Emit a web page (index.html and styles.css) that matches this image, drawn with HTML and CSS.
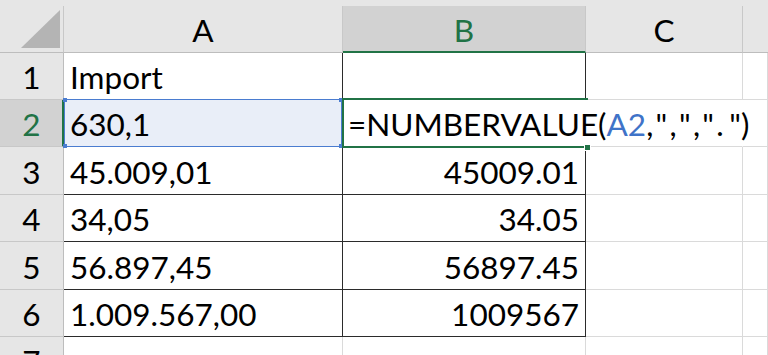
FILE: index.html
```html
<!DOCTYPE html>
<html lang="en">
<head>
<meta charset="utf-8">
<title>NUMBERVALUE</title>
<link rel="stylesheet" href="styles.css">
</head>
<body>
<div class="sheet">
  <div class="strip"></div>

  <div class="hdr corner">
    <svg class="selall" width="63" height="46" viewBox="0 0 63 46"><polygon points="21,42 60,4 60,42" fill="#b4b4b4"/></svg>
  </div>
  <div class="hdr col">A</div>
  <div class="hdr col sel-col">B</div>
  <div class="hdr col">C</div>
  <div class="hdr col last"></div>

  <div class="rh">1</div>
  <div class="cell dark-r">Import</div>
  <div class="cell dark-r"></div>
  <div class="cell"></div>
  <div class="cell"></div>

  <div class="rh sel-row">2</div>
  <div class="cell ref dark-r">630,1<span class="refbox"><i class="h tl"></i><i class="h tr"></i><i class="h bl"></i><i class="h br"></i></span></div>
  <div class="cell edit">=NUMBERVALUE(<span class="refc">A2</span><span class="punct">,",",".</span>")<span class="caret"></span><span class="handle"></span></div>
  <div class="cell no-r"></div>
  <div class="cell"></div>

  <div class="rh">3</div>
  <div class="cell dark-r dark-b">45.009,01</div>
  <div class="cell num dark-r dark-b">45009.01</div>
  <div class="cell"></div>
  <div class="cell"></div>

  <div class="rh">4</div>
  <div class="cell dark-r dark-b">34,05</div>
  <div class="cell num dark-r dark-b">34.05</div>
  <div class="cell"></div>
  <div class="cell"></div>

  <div class="rh">5</div>
  <div class="cell dark-r dark-b">56.897,45</div>
  <div class="cell num dark-r dark-b">56897.45</div>
  <div class="cell"></div>
  <div class="cell"></div>

  <div class="rh">6</div>
  <div class="cell dark-r dark-b">1.009.567,00</div>
  <div class="cell num dark-r dark-b">1009567</div>
  <div class="cell"></div>
  <div class="cell"></div>

  <div class="rh">7</div>
  <div class="cell"></div>
  <div class="cell"></div>
  <div class="cell"></div>
  <div class="cell"></div>
</div>
</body>
</html>
```

FILE: styles.css
```css
* { box-sizing: border-box; }
html, body { margin: 0; padding: 0; }
body {
  width: 768px;
  height: 355px;
  overflow: hidden;
  background: #fff;
  font-family: Lato, "Open Sans", sans-serif;
  font-size: 31.5px;
  color: #000;
}
.sheet {
  display: grid;
  grid-template-columns: 64px 279px 243px 157px 1fr;
  grid-template-rows: 6px 47px 47px 47px 48px 47px 48px 47px 47px;
}
.strip {
  grid-column: 1 / -1;
  background: #e6e6e6;
}
.hdr, .rh, .cell {
  display: flex;
  align-items: flex-end;
  padding-bottom: 6px;
  line-height: 1;
  white-space: nowrap;
}
.hdr {
  background: #e6e6e6;
  border-right: 1px solid #c8c8c8;
  border-bottom: 1px solid #bdbdbd;
  justify-content: center;
}
.hdr.last { border-right: 0; }
.corner {
  padding: 0;
  align-items: stretch;
  border-right: 1px solid #c8c8c8;
}
.selall { display: block; }
.sel-col {
  background: #d2d2d2;
  color: #217346;
  border-bottom: 2px solid #217346;
  padding-bottom: 5px;
}
.rh {
  background: #e6e6e6;
  border-right: 1px solid #bdbdbd;
  border-bottom: 1px solid #c8c8c8;
  justify-content: center;
}
.sel-row {
  background: #d2d2d2;
  color: #217346;
  border-right: 2px solid #217346;
  padding-left: 1px;
}
.cell {
  border-right: 1px solid #dadada;
  border-bottom: 1px solid #dadada;
  padding-left: 6px;
  padding-right: 6px;
}
.num { justify-content: flex-end; }
.dark-r { border-right-color: #2b2b2b; }
.dark-b { border-bottom-color: #2b2b2b; }
.no-r { border-right-color: transparent; }

.ref {
  position: relative;
  background: #e9eef8;
}
.refbox {
  position: absolute;
  top: -1px;
  left: 0;
  right: 0;
  bottom: -1px;
  border: 1px solid #4a7cd0;
}
.h {
  position: absolute;
  width: 4px;
  height: 4px;
  background: #4a7cd0;
}
.h.tl { left: -2px; top: -2px; }
.h.tr { right: -2px; top: -2px; }
.h.bl { left: -2px; bottom: -2px; }
.h.br { right: -2px; bottom: -2px; }

.edit {
  position: relative;
  border-right: 0;
  border-bottom: 1px solid transparent;
  padding-left: 5px;
}
.edit::before {
  content: "";
  position: absolute;
  top: -2px;
  left: -1px;
  right: -2px;
  bottom: -2px;
  border: 2px solid #217346;
  border-right: 0;
}
.refc { color: #3f73c8; }
.punct { letter-spacing: 5.5px; }
.caret {
  display: inline-block;
  width: 1px;
  height: 40px;
  background: #000;
  margin-left: 3px;
  margin-bottom: -2px;
}
.handle {
  position: absolute;
  right: -4px;
  bottom: -4px;
  width: 5px;
  height: 5px;
  background: #217346;
  outline: 1px solid #fff;
}
```
